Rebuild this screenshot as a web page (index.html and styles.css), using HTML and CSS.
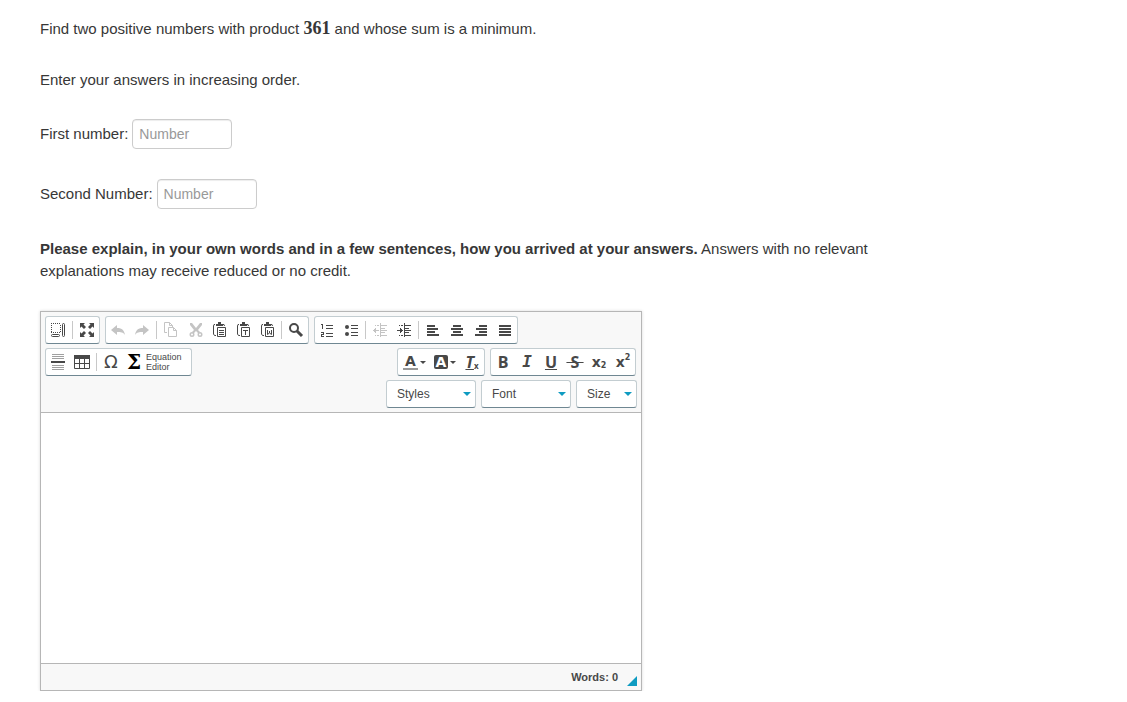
FILE: index.html
```
<!DOCTYPE html>
<html lang="en">
<head>
    <meta charset="UTF-8">
    <meta name="viewport" content="width=device-width, initial-scale=1.0">
    <title>Question</title>
    <link rel="stylesheet" href="styles.css">
</head>
<body>

    <main class="question">
        <p>Find two positive numbers with product <span class="math">361</span> and whose sum is a minimum.</p>
        <p>Enter your answers in increasing order.</p>

        <div class="answers">
            <div class="answer">
                <label for="first">First number:</label>
                <input type="text" id="first" placeholder="Number">
            </div>
            <div class="answer">
                <label for="second">Second Number:</label>
                <input type="text" id="second" placeholder="Number">
            </div>
        </div>

        <p><strong>Please explain, in your own words and in a few sentences, how you arrived at your answers.</strong> Answers with no relevant explanations may receive reduced or no credit.</p>

        <div class="editor">
            <div class="toolbar">
                <div class="row">
                    <div class="group">
                        <button type="button" aria-label="Show blocks">
                            <svg class="icon" viewBox="0 0 16 16">
                                <path d="M1 1.5h10M1 10.5h10M1.5 3v7M10.5 3v7" stroke-dasharray="1 1"/>
                                <rect x="12.5" y="1.5" width="2" height="13" rx="1"/>
                                <rect x="1.5" y="12.5" width="8" height="2" rx="1"/>
                            </svg>
                        </button>
                        <span class="sep"></span>
                        <button type="button" aria-label="Maximize">
                            <svg class="icon" viewBox="0 0 16 16">
                                <path class="fill" d="M1 1h5L4.500 2.500l2.500 2.500L5 7 2.500 4.500 1 6zM15 1v5l-1.500-1.500L11 7 9 5l2.500-2.500L10 1zM1 15v-5l1.500 1.500L5 9l2 2-2.500 2.500L6 15zM15 15h-5l1.500-1.500L9 11l2-2 2.500 2.500L15 10z"/>
                            </svg>
                        </button>
                    </div>

                    <div class="group">
                        <button type="button" aria-label="Undo" disabled>
                            <svg class="icon" viewBox="0 0 16 16">
                                <path class="fill" d="M1 8l6-5v3c4 0 7 1 8 7-2-3-4-3-8-3v3z"/>
                            </svg>
                        </button>
                        <button type="button" aria-label="Redo" disabled>
                            <svg class="icon" viewBox="0 0 16 16">
                                <path class="fill" d="M15 8L9 3v3c-4 0-7 1-8 7 2-3 4-3 8-3v3z"/>
                            </svg>
                        </button>
                        <span class="sep"></span>
                        <button type="button" aria-label="Copy" disabled>
                            <svg class="icon" viewBox="0 0 16 16">
                                <path d="M4 10.500H1.500v-10h5l3 3V5M6.500 .5v3h3M5.500 5.500h5l3 3v6h-8zM10.500 5.500v3h3"/>
                            </svg>
                        </button>
                        <button type="button" aria-label="Cut" disabled>
                            <svg class="icon" viewBox="0 0 16 16">
                                <path class="fill" d="M3 1h2l4 5 4-5h2v2l-4 5 2 2-1.500 1.500L9 9l-2.500 2.500L5 10l2-2-4-5z"/>
                                <circle cx="5" cy="12.500" r="1.750" stroke-width="1.500"/>
                                <circle cx="13" cy="12.500" r="1.750" stroke-width="1.500"/>
                            </svg>
                        </button>
                        <button type="button" aria-label="Paste">
                            <svg class="icon" viewBox="0 0 16 16">
                                <path d="M4 2.500H3L2.500 4v8l1 1.500H5M12 2.500h1l.5 1.500"/>
                                <path class="fill" d="M5 2h2V0h3v2h2v2H5z"/>
                                <path d="M6.500 5.500h8v9h-8zM8 8.500h5M8 10.500h5M8 12.500h5"/>
                            </svg>
                        </button>
                        <button type="button" aria-label="Paste as plain text">
                            <svg class="icon" viewBox="0 0 16 16">
                                <path d="M4 2.500H3L2.500 4v8l1 1.500H5M12 2.500h1l.5 1.500"/>
                                <path class="fill" d="M5 2h2V0h3v2h2v2H5z"/>
                                <path d="M6.500 5.500h8v9h-8zM8 8.500h5M10.500 8.500V13"/>
                            </svg>
                        </button>
                        <button type="button" aria-label="Paste from Word">
                            <svg class="icon" viewBox="0 0 16 16">
                                <path d="M4 2.500H3L2.500 4v8l1 1.500H5M12 2.500h1l.5 1.500"/>
                                <path class="fill" d="M5 2h2V0h3v2h2v2H5z"/>
                                <path d="M6.500 5.500h8v9h-8zM8.500 8v4.500l2-1.500 2 1.500V8M10.500 9v2"/>
                            </svg>
                        </button>
                        <span class="sep"></span>
                        <button type="button" aria-label="Find">
                            <svg class="icon" viewBox="0 0 16 16">
                                <circle cx="6" cy="6" r="4" stroke-width="2"/>
                                <path d="M9 9l5 5" stroke-width="3"/>
                            </svg>
                        </button>
                    </div>

                    <div class="group">
                        <button type="button" aria-label="Numbered list">
                            <svg class="icon crisp" viewBox="0 0 16 16">
                                <path d="M7 3.500h7M7 6.500h7M7 11.500h7M7 14.500h7M2 2.500h2M3.500 2v5M2 10.500h3M4.500 10v3M2 12.500h3M2.500 12v3M2 14.500h3"/>
                            </svg>
                        </button>
                        <button type="button" aria-label="Bulleted list">
                            <svg class="icon" viewBox="0 0 16 16">
                                <circle class="fill" cx="4" cy="5" r="2"/>
                                <circle class="fill" cx="4" cy="12" r="2"/>
                                <path d="M8 3.500h7M8 6.500h7M8 10.500h7M8 13.500h7"/>
                            </svg>
                        </button>
                        <span class="sep"></span>
                        <button type="button" aria-label="Decrease indent" disabled>
                            <svg class="icon" viewBox="0 0 16 16">
                                <path d="M8.500 1v14M9 3.500h6M9 6.500h4M9 8.500h6M9 10.500h4M9 13.500h6M1 8.500h6M3.500 6v5M2.500 7v3M3 3.500h1M5 3.500h2M3 13.500h1M5 13.500h2"/>
                            </svg>
                        </button>
                        <button type="button" aria-label="Increase indent">
                            <svg class="icon" viewBox="0 0 16 16">
                                <path d="M8.500 1v14M9 3.500h6M9 6.500h4M9 8.500h6M9 10.500h4M9 13.500h6M1 8.500h6M4.500 6v5M5.500 7v3M3 3.500h1M5 3.500h2M3 13.500h1M5 13.500h2"/>
                            </svg>
                        </button>
                        <span class="sep"></span>
                        <button type="button" aria-label="Align left">
                            <svg class="icon" viewBox="0 0 16 16">
                                <path class="fill" d="M2 3h8v2H2zM2 6h11v2H2zM2 9h8v2H2zM2 12h12v2H2z"/>
                            </svg>
                        </button>
                        <button type="button" aria-label="Center">
                            <svg class="icon" viewBox="0 0 16 16">
                                <path class="fill" d="M4 3h8v2H4zM2 6h12v2H2zM4 9h8v2H4zM2 12h12v2H2z"/>
                            </svg>
                        </button>
                        <button type="button" aria-label="Align right">
                            <svg class="icon" viewBox="0 0 16 16">
                                <path class="fill" d="M6 3h8v2H6zM3 6h11v2H3zM6 9h8v2H6zM2 12h12v2H2z"/>
                            </svg>
                        </button>
                        <button type="button" aria-label="Justify">
                            <svg class="icon" viewBox="0 0 16 16">
                                <path class="fill" d="M2 3h12v2H2zM2 6h12v2H2zM2 9h12v2H2zM2 12h12v2H2z"/>
                            </svg>
                        </button>
                    </div>
                </div>

                <div class="row">
                    <div class="group">
                        <button type="button" aria-label="Horizontal line">
                            <svg class="icon" viewBox="0 0 16 16">
                                <path class="light" d="M2 .5h12M2 2.500h12M2 4.500h12M2 11.500h12M2 13.500h12M2 15.500h12"/>
                                <path class="fill" d="M1 7h14v2H1z"/>
                            </svg>
                        </button>
                        <button type="button" aria-label="Table">
                            <svg class="icon" viewBox="0 0 16 16">
                                <path class="fill" d="M0 1h16v4H0z"/>
                                <path d="M.5 4v10.500h15V4M0 9.500h16M5.500 4v10M10.500 4v10"/>
                            </svg>
                        </button>
                        <span class="sep"></span>
                        <button type="button" class="omega" aria-label="Special character">Ω</button>
                        <button type="button" class="equation">
                            <span class="sigma">Σ</span>
                            <span>Equation<br>Editor</span>
                        </button>
                    </div>

                    <div class="group push">
                        <button type="button" class="color" aria-label="Text color"><span class="text-color">A</span><i class="caret"></i></button>
                        <button type="button" class="color" aria-label="Background color"><span class="bg-color">A</span><i class="caret"></i></button>
                        <button type="button" class="italic" aria-label="Remove format"><u>T</u><sub>x</sub></button>
                    </div>

                    <div class="group">
                        <button type="button" class="bold">B</button>
                        <button type="button" class="italic slab">I</button>
                        <button type="button" class="bold"><u>U</u></button>
                        <button type="button" class="bold"><s>&nbsp;S&nbsp;</s></button>
                        <button type="button" class="script">x<sub>2</sub></button>
                        <button type="button" class="script">x<sup>2</sup></button>
                    </div>
                </div>

                <div class="row combos">
                    <div class="combo">
                        <select aria-label="Styles"><option>Styles</option></select>
                    </div>
                    <div class="combo">
                        <select aria-label="Font"><option>Font</option></select>
                    </div>
                    <div class="combo small">
                        <select aria-label="Size"><option>Size</option></select>
                    </div>
                </div>
            </div>

            <textarea class="content" aria-label="Explanation"></textarea>

            <div class="footer">
                <span>Words: 0</span>
                <span class="resizer"></span>
            </div>
        </div>
    </main>

</body>
</html>
```
FILE: styles.css
```
* {
    box-sizing: border-box;
}

body {
    margin: 0;
    padding: 18px 40px 0;
    background: #fff;
    color: #373737;
    font-family: "Liberation Sans", Arial, sans-serif;
    font-size: 15px;
    line-height: 22px;
}

.question {
    max-width: 880px;
}

p {
    margin: 0 0 29px;
}

.math {
    font-family: "Liberation Serif", "Times New Roman", serif;
    font-size: 18px;
    font-weight: bold;
    line-height: 1;
}

/* answer boxes */
.answers {
    display: grid;
    gap: 30px;
    margin: -1px 0 29px;
}

.answer {
    display: flex;
    align-items: center;
    gap: 4px;
}

.answer input {
    width: 100px;
    height: 30px;
    padding: 4px 6px;
    border: 1px solid #ccc;
    border-radius: 4px;
    box-shadow: inset 0 1px 1px rgba(0, 0, 0, 0.075);
    color: #555;
    font-family: inherit;
    font-size: 14px;
}

.answer input::placeholder {
    color: #999;
}

/* editor */
.editor {
    max-width: 602px;
    border: 1px solid #b6b6b6;
    box-shadow: 0 0 3px rgba(0, 0, 0, 0.15);
}

.toolbar {
    display: flex;
    flex-direction: column;
    gap: 4px;
    padding: 4px;
    background: #f8f8f8;
    border-bottom: 1px solid #b6b6b6;
}

.row {
    display: flex;
    gap: 5px;
    padding-right: 1px;
}

.group,
.combo {
    display: flex;
    align-items: center;
    height: 28px;
    border: 1px solid #c3cdd1;
    border-bottom-color: #6f8792;
    border-radius: 3px;
    background: #fff;
}

.push {
    margin-left: auto;
}

.sep {
    width: 1px;
    height: 18px;
    margin: 0 2px;
    background: #c8c8c8;
}

button {
    display: flex;
    align-items: center;
    justify-content: center;
    width: 24px;
    height: 26px;
    padding: 0;
    border: 0;
    background: none;
    color: #484848;
    font-family: "Open Sans", sans-serif;
    font-size: 16px;
    line-height: 16px;
}

button:disabled {
    color: #c4c4c4;
}

.icon {
    display: block;
    width: 16px;
    height: 16px;
    fill: none;
    stroke: currentColor;
}

.icon .fill {
    fill: currentColor;
    stroke: none;
}

.icon .light {
    stroke: #a0a0a0;
}

.crisp {
    shape-rendering: crispEdges;
}

.omega {
    font-family: "DejaVu Sans", sans-serif;
    font-size: 18px;
}

.equation {
    justify-content: flex-start;
    gap: 2px;
    width: 68px;
    padding-left: 4px;
    font-family: "Liberation Sans", Arial, sans-serif;
    font-size: 9px;
    line-height: 10px;
    text-align: left;
}

.sigma {
    width: 17px;
    color: #000;
    font-family: "DejaVu Serif", serif;
    font-size: 20px;
    font-weight: bold;
}

.color {
    justify-content: flex-start;
    gap: 2px;
    width: 31px;
    padding-left: 5px;
    font-family: "DejaVu Sans", sans-serif;
    font-weight: bold;
    font-size: 14px;
}

.text-color {
    width: 15px;
    height: 16px;
    border-bottom: 2px solid #999;
    line-height: 14px;
}

.bg-color {
    width: 14px;
    height: 14px;
    border-radius: 2px;
    background: #484848;
    color: #fff;
    line-height: 14px;
}

.caret {
    border: 3px solid transparent;
    border-top-color: #484848;
    border-bottom: 0;
}

.bold {
    font-weight: bold;
}

.italic {
    font-weight: bold;
    font-style: italic;
}

.slab {
    font-family: "DejaVu Sans Mono", monospace;
}

.script {
    font-family: "DejaVu Sans", sans-serif;
    font-size: 14px;
    font-weight: bold;
}

sub,
sup {
    font-size: 8px;
    font-style: normal;
    line-height: 8px;
}

sub {
    align-self: flex-end;
    padding-bottom: 5px;
}

sup {
    align-self: flex-start;
    padding-top: 5px;
}

.combos {
    justify-content: flex-end;
    padding-right: 0;
}

.combo {
    position: relative;
    width: 90px;
}

.combo.small {
    width: 61px;
}

.combo::after {
    content: "";
    position: absolute;
    right: 4px;
    top: 11px;
    border: 4px solid transparent;
    border-top-color: #0e9bc1;
    border-bottom: 0;
    pointer-events: none;
}

.combo select {
    width: 100%;
    height: 100%;
    padding: 0 10px;
    border: 0;
    background: none;
    appearance: none;
    color: #484848;
    font-family: "Liberation Sans", Arial, sans-serif;
    font-size: 12px;
}

.content {
    display: block;
    width: 100%;
    height: 250px;
    padding: 20px;
    border: 0;
    outline: 0;
    resize: none;
    font-family: inherit;
    font-size: 13px;
}

.footer {
    display: flex;
    justify-content: flex-end;
    gap: 9px;
    padding: 2px 4px;
    border-top: 1px solid #b6b6b6;
    background: #f8f8f8;
    color: #484848;
    font-size: 11px;
    font-weight: bold;
}

.resizer {
    align-self: flex-end;
    margin-bottom: 2px;
    border: 5px solid #0e9bc1;
    border-top-color: transparent;
    border-left-color: transparent;
}
```
